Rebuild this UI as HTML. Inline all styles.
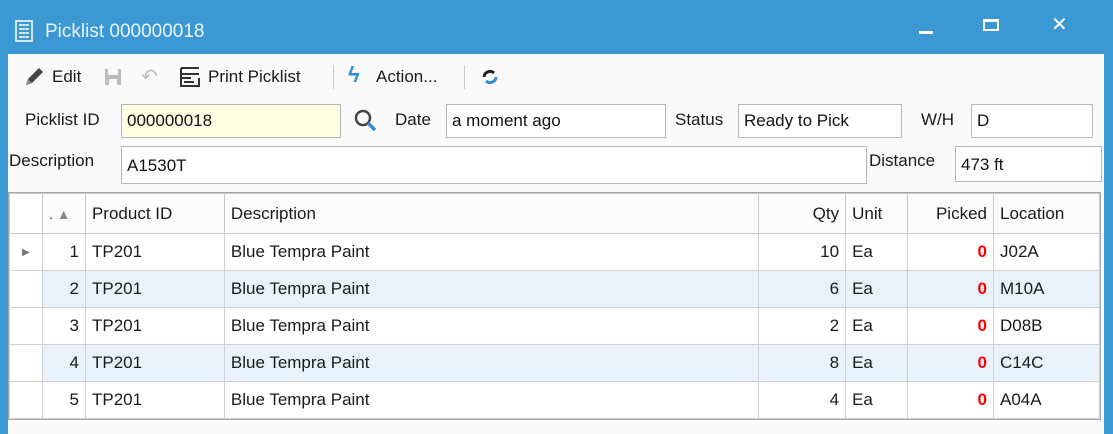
<!DOCTYPE html>
<html><head><style>
body{margin:0;width:1113px;height:434px;overflow:hidden;background:#3c98d3;font-family:"Liberation Sans",sans-serif;position:relative}
.abs{position:absolute}
.client{left:8px;top:54px;width:1096px;height:380px;background:#fafafa}
.t{color:#1a1a1a;font-size:17px;white-space:nowrap}
.box{position:absolute;background:#fff;border:1px solid #b5b5b5;box-sizing:border-box;font-size:17px;padding:6px 5px;color:#111;white-space:nowrap}
table{border-collapse:collapse;position:absolute;left:9px;top:193px;width:1091px;font-size:17px;background:#fff;outline:1px solid #a8a8a8}
td{border:1px solid #d0d0d0;height:36px;padding:0 6px;color:#1a1a1a;white-space:nowrap}
tr.h td{height:39px;background:#fcfcfc;border-color:#c8c8c8}
tr.alt td{background:#e9f2fa}
tr td:first-child{background:#fff}
.r{text-align:right}.red{color:#f00;font-weight:bold}
</style></head><body>
<svg class="abs" style="left:14px;top:20px" width="20" height="22" viewBox="0 0 20 22" fill="none" stroke="#fff" stroke-width="1.5"><rect x="2" y="1" width="16" height="20"/><path d="M5 5h10M5 9h10M5 13h10M5 17h10"/></svg>
<div class="abs" style="left:45px;top:21px;color:#e8f2fb;font-size:19px">Picklist 000000018</div>
<div class="abs" style="left:919px;top:31px;width:14px;height:3px;background:#fff"></div>
<div class="abs" style="left:983px;top:19px;width:16px;height:12px;border:2px solid #fff;border-top-width:3px;box-sizing:border-box"></div>
<div class="abs" style="left:1051px;top:12px;color:#fff;font-size:20px">✕</div>
<div class="abs client"></div>
<svg class="abs" style="left:22px;top:65px" width="24" height="24" viewBox="0 0 24 24"><path d="M4 20l2-6 11-11 4 4-11 11z" fill="#444"/><path d="M4 20l2-6 4 4z" fill="#888"/></svg>
<div class="abs t" style="left:52px;top:67px">Edit</div>
<svg class="abs" style="left:103px;top:67px" width="20" height="20"><rect x="2" y="2" width="16" height="16" fill="#bbb"/><rect x="5" y="2" width="10" height="6" fill="#fafafa"/><rect x="6" y="12" width="8" height="6" fill="#fafafa"/></svg>
<div class="abs" style="left:141px;top:64px;color:#bbb;font-size:20px">↶</div>
<svg class="abs" style="left:178px;top:65px" width="24" height="24" fill="none" stroke="#333" stroke-width="2"><path d="M3 3h18M3 3v18h18V13M3 9h18M3 13h10M6 17h10"/></svg>
<div class="abs t" style="left:208px;top:67px">Print Picklist</div>
<div class="abs" style="left:333px;top:65px;width:1px;height:24px;background:#ccc"></div>
<div class="abs" style="left:348px;top:62px;color:#2d8fd8;font-size:22px;font-weight:bold">ϟ</div>
<div class="abs t" style="left:376px;top:67px">Action...</div>
<div class="abs" style="left:464px;top:65px;width:1px;height:24px;background:#ccc"></div>
<svg class="abs" style="left:478px;top:65px" width="24" height="24" fill="none" stroke-width="3"><path d="M6 12a6 6 0 0 1 10-4" stroke="#222"/><path d="M18 12a6 6 0 0 1-10 4" stroke="#2d8fd8"/></svg>
<div class="abs t" style="left:25px;top:110px">Picklist ID</div>
<div class="box" style="left:121px;top:104px;width:220px;height:34px;background:#fffde3">000000018</div>
<svg class="abs" style="left:352px;top:107px" width="28" height="28" fill="none" stroke-width="2.5"><circle cx="11" cy="11" r="7" stroke="#444"/><path d="M16 16l7 7" stroke="#2d8fd8" stroke-width="3.5"/></svg>
<div class="abs t" style="left:395px;top:110px">Date</div>
<div class="box" style="left:446px;top:104px;width:220px;height:34px">a moment ago</div>
<div class="abs t" style="left:675px;top:110px">Status</div>
<div class="box" style="left:738px;top:104px;width:164px;height:34px">Ready to Pick</div>
<div class="abs t" style="left:921px;top:110px">W/H</div>
<div class="box" style="left:971px;top:104px;width:122px;height:34px">D</div>
<div class="abs t" style="left:9px;top:151px">Description</div>
<div class="box" style="left:121px;top:146px;width:746px;height:38px;padding-top:9px">A1530T</div>
<div class="abs t" style="left:869px;top:151px">Distance</div>
<div class="box" style="left:955px;top:146px;width:147px;height:36px;padding-top:8px">473 ft</div>
<table>
<colgroup><col style="width:33px"><col style="width:43px"><col style="width:139px"><col style="width:535px"><col style="width:87px"><col style="width:62px"><col style="width:86px"><col style="width:106px"></colgroup>
<tr class="h"><td></td><td style="font-size:14px">. <span style="color:#888">▲</span></td><td>Product ID</td><td>Description</td><td class="r">Qty</td><td>Unit</td><td class="r">Picked</td><td>Location</td></tr>
<tr><td style="color:#777;font-size:10px;padding-left:12px">▶</td><td class="r">1</td><td>TP201</td><td>Blue Tempra Paint</td><td class="r">10</td><td>Ea</td><td class="r red">0</td><td>J02A</td></tr>
<tr class="alt"><td></td><td class="r">2</td><td>TP201</td><td>Blue Tempra Paint</td><td class="r">6</td><td>Ea</td><td class="r red">0</td><td>M10A</td></tr>
<tr><td></td><td class="r">3</td><td>TP201</td><td>Blue Tempra Paint</td><td class="r">2</td><td>Ea</td><td class="r red">0</td><td>D08B</td></tr>
<tr class="alt"><td></td><td class="r">4</td><td>TP201</td><td>Blue Tempra Paint</td><td class="r">8</td><td>Ea</td><td class="r red">0</td><td>C14C</td></tr>
<tr><td></td><td class="r">5</td><td>TP201</td><td>Blue Tempra Paint</td><td class="r">4</td><td>Ea</td><td class="r red">0</td><td>A04A</td></tr>
</table>
</body></html>
